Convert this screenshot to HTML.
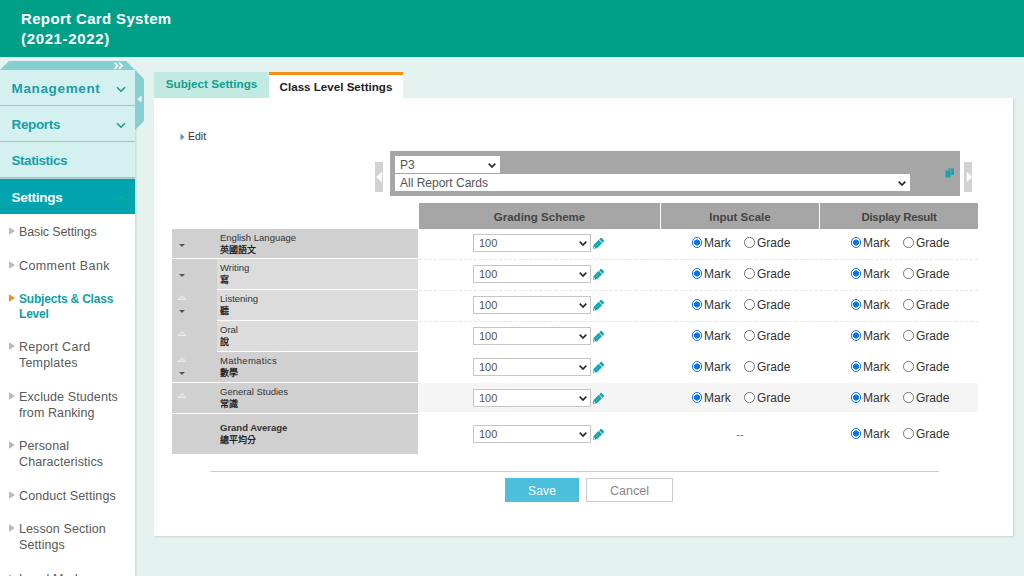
<!DOCTYPE html>
<html><head><meta charset="utf-8"><title>Report Card System</title>
<style>
*{box-sizing:border-box;margin:0;padding:0}
html,body{width:1024px;height:576px;overflow:hidden}
body{background:#e4f3f0;font-family:"Liberation Sans",sans-serif;position:relative;color:#333}
.abs{position:absolute}
#hdr{position:absolute;left:0;top:0;width:1024px;height:57px;background:#009f87}
#hdr .t{position:absolute;left:21px;top:9px;color:#fff;font-weight:bold;font-size:15px;line-height:20px;letter-spacing:.35px;white-space:nowrap}
#hdr .t span{letter-spacing:.65px}
#side{position:absolute;left:0;top:70px;width:135px;height:506px;background:#fff;box-shadow:1px 0 2.5px rgba(0,0,0,.13)}
.mi{position:absolute;left:0;width:135px;height:36px;background:#d5f1ef;border-bottom:1px solid #86cdd0;color:#189faa;font-weight:bold;font-size:13.5px;line-height:37px;padding-left:11.5px;white-space:nowrap}
.mi.act{background:#00a3ae;color:#fff;border-bottom:0;border-top:1px solid #b4d0d0;line-height:38px}
.mi svg{position:absolute;left:115.5px;top:16px}
.si{position:absolute;left:19px;font-size:12.5px;line-height:16px;color:#595959;white-space:nowrap;letter-spacing:.1px}
.si.cur{color:#0f9fa8;font-weight:bold;font-size:12px;letter-spacing:-.2px;line-height:15px}
.bl{position:absolute;left:9px}
#panel{position:absolute;left:154px;top:98px;width:859px;height:438px;background:#fff;box-shadow:1px 1px 2px rgba(0,0,0,.13)}
.tab1{position:absolute;left:154px;top:72px;width:115px;height:26px;background:#c3e9e3;color:#0f9f8b;font-weight:bold;font-size:11.7px;line-height:23px;text-align:center;white-space:nowrap}
.tab2{position:absolute;left:269px;top:72px;width:134px;height:27px;background:#fff;border-top:3px solid #f39019;color:#222;font-weight:bold;font-size:11.6px;line-height:24px;text-align:center;white-space:nowrap}
.fbar{position:absolute;left:389.5px;top:151px;width:570px;height:44.6px;background:#a6a6a6}
.sel{position:absolute;background:#fff;border:1px solid #c6c6c6;font-size:11px;line-height:17px;color:#555;padding-left:5px;white-space:nowrap}
.sel .chev{position:absolute;right:3px;top:6px}
.th{position:absolute;top:203px;height:26px;background:#a6a6a6;color:#444;font-weight:bold;font-size:11.5px;line-height:28px;text-align:center;white-space:nowrap}
.lrow{position:absolute;left:172px;width:246px}
.lrow .ac{position:absolute;left:0;top:0;width:45px;height:100%;background:#d0d0d0}
.lrow .tc{position:absolute;left:45px;top:0;width:201px;height:100%;background:#d0d0d0;padding:3px 0 0 3px}
.lrow.comp .tc{background:#dcdcdc}
.lrow.comp .ac{height:calc(100% + 1px)}
.lrow .en{font-size:9.5px;line-height:11px;color:#333;white-space:nowrap}
.lrow.ga .tc{padding-top:8px}
.cj{display:block;margin-top:2px;overflow:visible}
.cj text{font-family:"Liberation Sans","Noto Sans CJK TC",sans-serif;font-size:9px}
.ar{position:absolute;left:5px}
.dot{position:absolute;left:419px;width:559px;height:0;border-top:1px dashed #e4e4e4}
.hov{position:absolute;left:418px;width:560px;height:29.3px;background:#f5f5f5}
.rd{position:absolute;width:10.4px;height:10.4px;border-radius:50%;border:1px solid #767676;background:#fff}
.rd.on{border:1.35px solid #0f73ee;background:radial-gradient(circle,#0f73ee 0,#0f73ee 2.8px,#fff 3.3px)}
.rl{position:absolute;font-size:12px;line-height:14px;color:#333;white-space:nowrap}
.pen{display:block}
.btn{position:absolute;top:477.8px;height:24.5px;font-size:12.5px;line-height:26px;text-align:center}

</style></head>
<body>
<svg width="0" height="0" style="position:absolute"><defs>
<symbol id="pencil" viewBox="0 0 12 12"><g transform="translate(0.1 11.8) rotate(-45)" fill="#14a4b1"><path d="M0 0 L3 -2.35 L10.3 -2.35 L10.3 2.35 L3 2.35 Z"/><path d="M11 -2.35 L12.8 -2.35 Q13.6 -2.35 13.6 -1.5 L13.6 1.5 Q13.6 2.35 12.8 2.35 L11 2.35 Z"/><circle cx="2" cy="0" r="0.5" fill="#fff"/><path d="M4 0 L9.3 0" stroke="#7fd0d6" stroke-width="0.6" stroke-dasharray="0.9 0.8" fill="none"/></g></symbol>
</defs></svg>
<div id="hdr"><div class="t">Report Card System<br><span>(2021-2022)</span></div></div>

<svg class="abs" style="left:0;top:60px;z-index:3" width="146" height="72" viewBox="0 0 146 72">
<path d="M0 10 L9 1 L126 1 L135 10 Z" fill="#86cfd1"/>
<path d="M135 10 L144 19 L144 61 L135 70 Z" fill="#86cfd1"/>
<path d="M141.5 35.5 L141.5 42.5 L137.5 39 Z" fill="#fff"/>
<path d="M114.6 2.6 L117.6 5.7 L114.6 8.8 M119.1 2.6 L122.1 5.7 L119.1 8.8" fill="none" stroke="#fff" stroke-width="1.7"/>
</svg>

<div id="side">
<div class="mi" style="top:0;letter-spacing:.65px">Management<svg width="10" height="7" viewBox="0 0 10 7"><path d="M1 1.2 L5 5.2 L9 1.2" fill="none" stroke="#12a07c" stroke-width="1.6"/></svg></div>
<div class="mi" style="top:36px;letter-spacing:-.35px">Reports<svg width="10" height="7" viewBox="0 0 10 7"><path d="M1 1.2 L5 5.2 L9 1.2" fill="none" stroke="#12a07c" stroke-width="1.6"/></svg></div>
<div class="mi" style="top:72px;letter-spacing:-.45px">Statistics</div>
<div class="mi act" style="top:108px;letter-spacing:-.3px">Settings<svg width="10" height="7" viewBox="0 0 10 7"><path d="M1 5.5 L5 1.5 L9 5.5" fill="none" stroke="#0fab90" stroke-width="1.5"/></svg></div>

<svg class="bl" style="top:157px" width="6" height="8" viewBox="0 0 6 8"><path d="M0 0.2 L6 4 L0 7.8 Z" fill="#b9b9b9"/></svg><div class="si" style="top:154px;letter-spacing:-.12px">Basic Settings</div>
<svg class="bl" style="top:191px" width="6" height="8" viewBox="0 0 6 8"><path d="M0 0.2 L6 4 L0 7.8 Z" fill="#b9b9b9"/></svg><div class="si" style="top:188px;letter-spacing:.4px">Comment Bank</div>
<svg class="bl" style="top:224px" width="6" height="8" viewBox="0 0 6 8"><path d="M0 0.2 L6 4 L0 7.8 Z" fill="#f28c1e"/></svg><div class="si cur" style="top:222px">Subjects &amp; Class<br>Level</div>
<svg class="bl" style="top:272px" width="6" height="8" viewBox="0 0 6 8"><path d="M0 0.2 L6 4 L0 7.8 Z" fill="#b9b9b9"/></svg><div class="si" style="top:269px;letter-spacing:.3px">Report Card<br><span style="letter-spacing:.2px">Templates</span></div>
<svg class="bl" style="top:322px" width="6" height="8" viewBox="0 0 6 8"><path d="M0 0.2 L6 4 L0 7.8 Z" fill="#b9b9b9"/></svg><div class="si" style="top:319px">Exclude Students<br>from Ranking</div>
<svg class="bl" style="top:371px" width="6" height="8" viewBox="0 0 6 8"><path d="M0 0.2 L6 4 L0 7.8 Z" fill="#b9b9b9"/></svg><div class="si" style="top:368px">Personal<br>Characteristics</div>
<svg class="bl" style="top:421px" width="6" height="8" viewBox="0 0 6 8"><path d="M0 0.2 L6 4 L0 7.8 Z" fill="#b9b9b9"/></svg><div class="si" style="top:418px">Conduct Settings</div>
<svg class="bl" style="top:454px" width="6" height="8" viewBox="0 0 6 8"><path d="M0 0.2 L6 4 L0 7.8 Z" fill="#b9b9b9"/></svg><div class="si" style="top:451px">Lesson Section<br>Settings</div>
<svg class="bl" style="top:504px" width="6" height="8" viewBox="0 0 6 8"><path d="M0 0.2 L6 4 L0 7.8 Z" fill="#b9b9b9"/></svg><div class="si" style="top:501px">Level Mark</div>
</div>

<div id="panel"></div>
<div class="tab1">Subject Settings</div>
<div class="tab2">Class Level Settings</div>

<svg class="abs" style="left:180px;top:133px" width="5" height="8" viewBox="0 0 5 8"><path d="M0.5 0.5 L4.5 4 L0.5 7.5 Z" fill="#5b93c4"/></svg>
<div class="abs" style="left:188px;top:129px;font-size:10.5px;line-height:14px;color:#333">Edit</div>

<div class="abs" style="left:375px;top:162px;width:8px;height:30px;background:#d2d2d2"></div>
<svg class="abs" style="left:375px;top:172px" width="8" height="10" viewBox="0 0 8 10"><path d="M6.8 -0.3 L6.8 10.3 L1.2 5 Z" fill="#fff"/></svg>
<div class="fbar"></div>
<div class="sel" style="left:395px;top:156px;width:105px;height:17px;border-color:#fff;font-size:12px;line-height:16px;padding-left:4px"><span>P3</span><svg class="chev" viewBox="0 0 8 5" width="8" height="5"><path d="M0.7 0.7 L4 4 L7.3 0.7" fill="none" stroke="#2a2a2a" stroke-width="1.7"/></svg></div>
<div class="sel" style="left:395px;top:174px;width:515px;height:17px;border-color:#fff;font-size:12px;line-height:17px;padding-left:4px"><span>All Report Cards</span><svg class="chev" viewBox="0 0 8 5" width="8" height="5"><path d="M0.7 0.7 L4 4 L7.3 0.7" fill="none" stroke="#2a2a2a" stroke-width="1.7"/></svg></div>
<svg class="abs" style="left:945px;top:168px" width="10" height="10" viewBox="0 0 10 10"><path d="M0.5 2.5 H5.5 V9.5 H0.5 Z M3.5 0.5 H9 V7 H6.2 V1.8 H3.5 Z" fill="#12a3b4"/></svg>
<div class="abs" style="left:964px;top:162px;width:8px;height:30px;background:#d2d2d2"></div>
<svg class="abs" style="left:964px;top:172px" width="8" height="10" viewBox="0 0 8 10"><path d="M2.7 -0.3 L2.7 10.3 L8.3 5 Z" fill="#fff"/></svg>

<div class="th" style="left:419px;width:241px">Grading Scheme</div>
<div class="th" style="left:661px;width:158px">Input Scale</div>
<div class="th" style="left:820px;width:158px;letter-spacing:-.3px">Display Result</div>

<div class="lrow main" style="top:228.5px;height:29.5px"><div class="ac"></div><div class="tc" style="padding-top:3.5px"><div class="en">English Language</div><svg class="cj" width="36" height="9" viewBox="0 0 36 9"><text x="0" y="7.9" fill="#111" stroke="#111" stroke-width="0.25">英國語文</text></svg></div>
<svg class="ar" style="top:15.5px;left:7px" width="6" height="3" viewBox="0 0 6 3"><path d="M0 0 L6 0 L3 3 Z" fill="#555"/></svg>
</div>
<div class="lrow comp" style="top:259px;height:30px"><div class="ac"></div><div class="tc"><div class="en">Writing</div><svg class="cj" width="9" height="9" viewBox="0 0 9 9"><text x="0" y="7.9" fill="#111" stroke="#111" stroke-width="0.25">寫</text></svg></div>
<svg class="ar" style="top:15px;left:7px" width="6" height="3" viewBox="0 0 6 3"><path d="M0 0 L6 0 L3 3 Z" fill="#555"/></svg>
</div>
<div class="lrow comp" style="top:290px;height:30px"><div class="ac"></div><div class="tc"><div class="en">Listening</div><svg class="cj" width="9" height="9" viewBox="0 0 9 9"><text x="0" y="7.9" fill="#111" stroke="#111" stroke-width="0.25">聽</text></svg></div>
<svg class="ar" style="top:4.5px" width="10" height="5" viewBox="0 0 10 5"><path d="M0.8 4.5 L5 0.7 L9.2 4.5 Z" fill="#dadada" stroke="#ececec" stroke-width="0.9"/></svg><svg class="ar" style="top:19.5px;left:7px" width="6" height="3" viewBox="0 0 6 3"><path d="M0 0 L6 0 L3 3 Z" fill="#555"/></svg>
</div>
<div class="lrow comp" style="top:321px;height:30px"><div class="ac"></div><div class="tc"><div class="en">Oral</div><svg class="cj" width="9" height="9" viewBox="0 0 9 9"><text x="0" y="7.9" fill="#111" stroke="#111" stroke-width="0.25">說</text></svg></div>
<svg class="ar" style="top:9.5px" width="10" height="5" viewBox="0 0 10 5"><path d="M0.8 4.5 L5 0.7 L9.2 4.5 Z" fill="#dadada" stroke="#ececec" stroke-width="0.9"/></svg>
</div>
<div class="lrow main" style="top:352px;height:30px"><div class="ac"></div><div class="tc"><div class="en"><span style="letter-spacing:.3px">Mathematics</span></div><svg class="cj" width="18" height="9" viewBox="0 0 18 9"><text x="0" y="7.9" fill="#111" stroke="#111" stroke-width="0.25">數學</text></svg></div>
<svg class="ar" style="top:4.5px" width="10" height="5" viewBox="0 0 10 5"><path d="M0.8 4.5 L5 0.7 L9.2 4.5 Z" fill="#dadada" stroke="#ececec" stroke-width="0.9"/></svg><svg class="ar" style="top:19.5px;left:7px" width="6" height="3" viewBox="0 0 6 3"><path d="M0 0 L6 0 L3 3 Z" fill="#555"/></svg>
</div>
<div class="lrow main" style="top:383px;height:30px"><div class="ac"></div><div class="tc"><div class="en">General Studies</div><svg class="cj" width="18" height="9" viewBox="0 0 18 9"><text x="0" y="7.9" fill="#111" stroke="#111" stroke-width="0.25">常識</text></svg></div>
<svg class="ar" style="top:9.5px" width="10" height="5" viewBox="0 0 10 5"><path d="M0.8 4.5 L5 0.7 L9.2 4.5 Z" fill="#dadada" stroke="#ececec" stroke-width="0.9"/></svg>
</div>
<div class="lrow main ga" style="top:414px;height:40px"><div class="ac"></div><div class="tc"><div class="en"><b>Grand Average</b></div><svg class="cj" width="36" height="9" viewBox="0 0 36 9"><text x="0" y="7.9" fill="#111" stroke="#111" stroke-width="0.25">總平均分</text></svg></div></div>
<div class="sel" style="left:473px;top:234px;width:118px;height:18px"><span>100</span><svg class="chev" viewBox="0 0 8 5" width="8" height="5"><path d="M0.7 0.7 L4 4 L7.3 0.7" fill="none" stroke="#2a2a2a" stroke-width="1.7"/></svg></div>
<div style="position:absolute;left:593px;top:236.5px"><svg class="pen" viewBox="0 0 12 12" width="12" height="12"><use href="#pencil"/></svg></div>
<i class="rd on" style="left:691.8px;top:237.2px"></i><span class="rl" style="left:704px;top:236px">Mark</span><i class="rd" style="left:744.2px;top:237.2px"></i><span class="rl" style="left:757px;top:236px">Grade</span>
<i class="rd on" style="left:850.8px;top:237.2px"></i><span class="rl" style="left:863px;top:236px">Mark</span><i class="rd" style="left:903.2px;top:237.2px"></i><span class="rl" style="left:916px;top:236px">Grade</span>
<div class="dot" style="top:259px"></div>
<div class="sel" style="left:473px;top:265px;width:118px;height:18px"><span>100</span><svg class="chev" viewBox="0 0 8 5" width="8" height="5"><path d="M0.7 0.7 L4 4 L7.3 0.7" fill="none" stroke="#2a2a2a" stroke-width="1.7"/></svg></div>
<div style="position:absolute;left:593px;top:267.5px"><svg class="pen" viewBox="0 0 12 12" width="12" height="12"><use href="#pencil"/></svg></div>
<i class="rd on" style="left:691.8px;top:268.2px"></i><span class="rl" style="left:704px;top:267px">Mark</span><i class="rd" style="left:744.2px;top:268.2px"></i><span class="rl" style="left:757px;top:267px">Grade</span>
<i class="rd on" style="left:850.8px;top:268.2px"></i><span class="rl" style="left:863px;top:267px">Mark</span><i class="rd" style="left:903.2px;top:268.2px"></i><span class="rl" style="left:916px;top:267px">Grade</span>
<div class="dot" style="top:290px"></div>
<div class="sel" style="left:473px;top:296px;width:118px;height:18px"><span>100</span><svg class="chev" viewBox="0 0 8 5" width="8" height="5"><path d="M0.7 0.7 L4 4 L7.3 0.7" fill="none" stroke="#2a2a2a" stroke-width="1.7"/></svg></div>
<div style="position:absolute;left:593px;top:298.5px"><svg class="pen" viewBox="0 0 12 12" width="12" height="12"><use href="#pencil"/></svg></div>
<i class="rd on" style="left:691.8px;top:299.2px"></i><span class="rl" style="left:704px;top:298px">Mark</span><i class="rd" style="left:744.2px;top:299.2px"></i><span class="rl" style="left:757px;top:298px">Grade</span>
<i class="rd on" style="left:850.8px;top:299.2px"></i><span class="rl" style="left:863px;top:298px">Mark</span><i class="rd" style="left:903.2px;top:299.2px"></i><span class="rl" style="left:916px;top:298px">Grade</span>
<div class="dot" style="top:321px"></div>
<div class="sel" style="left:473px;top:327px;width:118px;height:18px"><span>100</span><svg class="chev" viewBox="0 0 8 5" width="8" height="5"><path d="M0.7 0.7 L4 4 L7.3 0.7" fill="none" stroke="#2a2a2a" stroke-width="1.7"/></svg></div>
<div style="position:absolute;left:593px;top:329.5px"><svg class="pen" viewBox="0 0 12 12" width="12" height="12"><use href="#pencil"/></svg></div>
<i class="rd on" style="left:691.8px;top:330.2px"></i><span class="rl" style="left:704px;top:329px">Mark</span><i class="rd" style="left:744.2px;top:330.2px"></i><span class="rl" style="left:757px;top:329px">Grade</span>
<i class="rd on" style="left:850.8px;top:330.2px"></i><span class="rl" style="left:863px;top:329px">Mark</span><i class="rd" style="left:903.2px;top:330.2px"></i><span class="rl" style="left:916px;top:329px">Grade</span>
<div class="sel" style="left:473px;top:358px;width:118px;height:18px"><span>100</span><svg class="chev" viewBox="0 0 8 5" width="8" height="5"><path d="M0.7 0.7 L4 4 L7.3 0.7" fill="none" stroke="#2a2a2a" stroke-width="1.7"/></svg></div>
<div style="position:absolute;left:593px;top:360.5px"><svg class="pen" viewBox="0 0 12 12" width="12" height="12"><use href="#pencil"/></svg></div>
<i class="rd on" style="left:691.8px;top:361.2px"></i><span class="rl" style="left:704px;top:360px">Mark</span><i class="rd" style="left:744.2px;top:361.2px"></i><span class="rl" style="left:757px;top:360px">Grade</span>
<i class="rd on" style="left:850.8px;top:361.2px"></i><span class="rl" style="left:863px;top:360px">Mark</span><i class="rd" style="left:903.2px;top:361.2px"></i><span class="rl" style="left:916px;top:360px">Grade</span>
<div class="hov" style="top:383px"></div>
<div class="sel" style="left:473px;top:389px;width:118px;height:18px"><span>100</span><svg class="chev" viewBox="0 0 8 5" width="8" height="5"><path d="M0.7 0.7 L4 4 L7.3 0.7" fill="none" stroke="#2a2a2a" stroke-width="1.7"/></svg></div>
<div style="position:absolute;left:593px;top:391.5px"><svg class="pen" viewBox="0 0 12 12" width="12" height="12"><use href="#pencil"/></svg></div>
<i class="rd on" style="left:691.8px;top:392.2px"></i><span class="rl" style="left:704px;top:391px">Mark</span><i class="rd" style="left:744.2px;top:392.2px"></i><span class="rl" style="left:757px;top:391px">Grade</span>
<i class="rd on" style="left:850.8px;top:392.2px"></i><span class="rl" style="left:863px;top:391px">Mark</span><i class="rd" style="left:903.2px;top:392.2px"></i><span class="rl" style="left:916px;top:391px">Grade</span>
<div class="sel" style="left:473px;top:425px;width:118px;height:18px"><span>100</span><svg class="chev" viewBox="0 0 8 5" width="8" height="5"><path d="M0.7 0.7 L4 4 L7.3 0.7" fill="none" stroke="#2a2a2a" stroke-width="1.7"/></svg></div>
<div style="position:absolute;left:593px;top:427.5px"><svg class="pen" viewBox="0 0 12 12" width="12" height="12"><use href="#pencil"/></svg></div>
<span class="rl" style="left:736px;top:427px;color:#777;font-size:11.5px">--</span>
<i class="rd on" style="left:850.8px;top:428.2px"></i><span class="rl" style="left:863px;top:427px">Mark</span><i class="rd" style="left:903.2px;top:428.2px"></i><span class="rl" style="left:916px;top:427px">Grade</span>

<div class="abs" style="left:210px;top:471px;width:729px;height:1px;background:#ccc"></div>
<div class="btn" style="left:505.3px;width:73.5px;background:#4bbfdc;color:#fff;font-size:12px;letter-spacing:.2px">Save</div>
<div class="btn" style="left:586px;width:87px;background:#fff;border:1px solid #ccc;color:#888;line-height:24.5px">Cancel</div>

</body></html>
